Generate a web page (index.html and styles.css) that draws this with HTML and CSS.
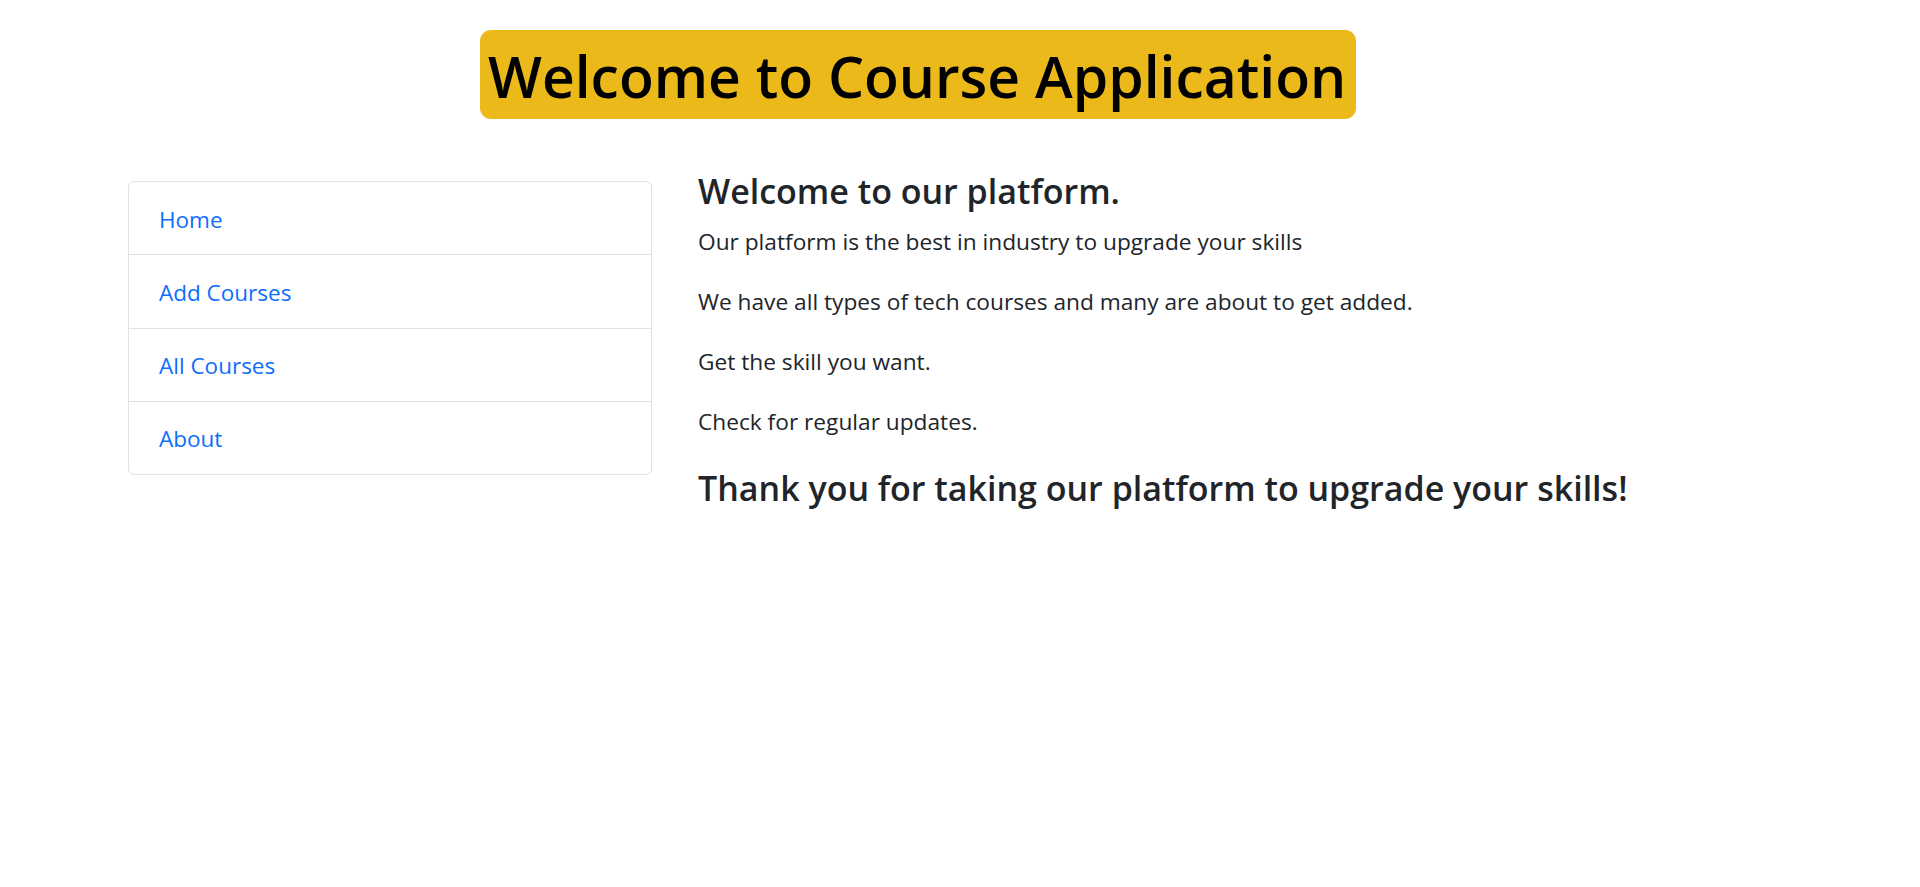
FILE: index.html
```html
<!DOCTYPE html>
<html lang="en">
<head>
  <meta charset="UTF-8" />
  <meta name="viewport" content="width=device-width, initial-scale=1.0" />
  <title>Course Application</title>
  <link rel="stylesheet" href="styles.css">
</head>
<body>
  <header class="header">
    <h1 class="title">Welcome to Course Application</h1>
  </header>

  <div class="layout">
    <nav class="menu">
      <a class="menu-item" href="#">Home</a>
      <a class="menu-item" href="#">Add Courses</a>
      <a class="menu-item" href="#">All Courses</a>
      <a class="menu-item" href="#">About</a>
    </nav>

    <main class="content">
      <h2 class="lead-title">Welcome to our platform.</h2>
      <p>Our platform is the best in industry to upgrade your skills</p>
      <p>We have all types of tech courses and many are about to get added.</p>
      <p>Get the skill you want.</p>
      <p>Check for regular updates.</p>
      <h2 class="thanks">Thank you for taking our platform to upgrade your skills!</h2>
    </main>
  </div>
</body>
</html>
```

FILE: styles.css
```css
* {
  box-sizing: border-box;
}
body {
  margin: 0;
  font-family: 'Open Sans', 'Noto Sans', sans-serif;
  color: #212529;
  background: #fff;
}
.header {
  padding: 30px 0 0 480px;
}
.title {
  display: inline-block;
  margin: 0;
  padding: 3px 10px 0 8px;
  height: 89px;
  line-height: 86px;
  background-color: #ebba1a;
  color: #000;
  border-radius: 11px;
  font-size: 57px;
  font-weight: 600;
  white-space: nowrap;
}
.layout {
  display: flex;
  gap: 46px;
  padding: 0 0 0 128px;
}
.menu {
  width: 524px;
  flex: none;
  margin-top: 62px;
  align-self: flex-start;
  display: flex;
  flex-direction: column;
  border: 1px solid #dee2e6;
  border-radius: 6px;
}
.menu-item {
  display: block;
  padding: 22.5px 30px 19.75px 30px;
  font-size: 22.5px;
  line-height: 30px;
  color: #0d6efd;
  text-decoration: none;
  border-bottom: 1px solid #dee2e6;
}
.menu-item:last-child {
  border-bottom: none;
}
.content {
  padding-top: 51px;
}
.lead-title {
  margin: 0 0 15px;
  font-size: 34px;
  font-weight: 600;
  line-height: 42px;
}
.content p {
  margin: 0 0 30px;
  font-size: 22.7px;
  line-height: 30px;
}
.thanks {
  margin: 0;
  font-size: 34px;
  font-weight: 600;
  line-height: 42px;
}
```
